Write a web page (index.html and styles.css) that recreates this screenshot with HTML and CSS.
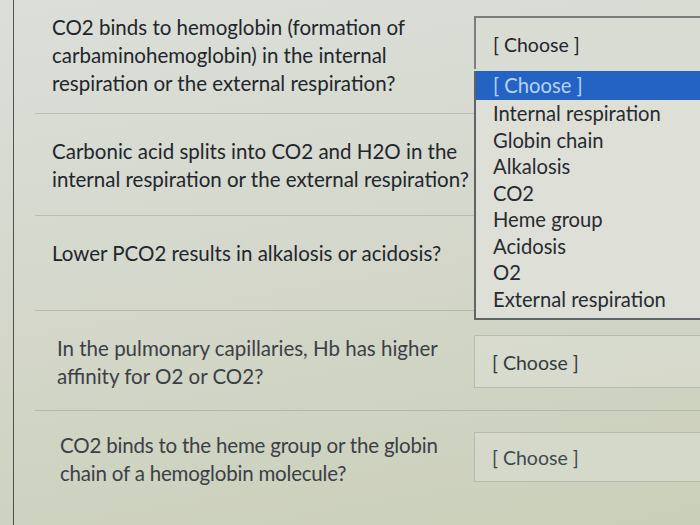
FILE: index.html
```html
<!DOCTYPE html>
<html lang="en">
<head>
<meta charset="utf-8">
<title>Matching quiz</title>
<link rel="stylesheet" href="styles.css">
</head>
<body>
<div class="quiz">
  <div class="row row-1">
    <div class="question">CO2 binds to hemoglobin (formation of carbaminohemoglobin) in the internal respiration or the external respiration?</div>
    <div class="answer">
      <div class="select open">[ Choose ]</div>
      <ul class="options">
        <li class="selected">[ Choose ]</li>
        <li>Internal respiration</li>
        <li>Globin chain</li>
        <li>Alkalosis</li>
        <li>CO2</li>
        <li>Heme group</li>
        <li>Acidosis</li>
        <li>O2</li>
        <li>External respiration</li>
      </ul>
    </div>
  </div>
  <div class="row row-2">
    <div class="question">Carbonic acid splits into CO2 and H2O in the internal respiration or the external respiration?</div>
    <div class="answer"></div>
  </div>
  <div class="row row-3">
    <div class="question">Lower PCO2 results in alkalosis or acidosis?</div>
    <div class="answer"></div>
  </div>
  <div class="row row-4">
    <div class="question faded">In the pulmonary capillaries, Hb has higher affinity for O2 or CO2?</div>
    <div class="answer"><div class="select">[ Choose ]</div></div>
  </div>
  <div class="row row-5">
    <div class="question faded">CO2 binds to the heme group or the globin chain of a hemoglobin molecule?</div>
    <div class="answer"><div class="select">[ Choose ]</div></div>
  </div>
</div>
</body>
</html>
```

FILE: styles.css
```css
html, body {
  margin: 0;
  padding: 0;
  height: 525px;
  overflow: hidden;
}
body {
  background: linear-gradient(170deg, #dcdfd9 0%, #d5d8cc 45%, #cacfb9 100%);
  font-family: Lato, "Open Sans", sans-serif;
  color: #22262c;
}
.quiz {
  margin-left: 13px;
  border-left: 1px solid #4f5350;
  height: 525px;
  padding-left: 21px;
}
.row {
  display: grid;
  grid-template-columns: 439px 1fr;
  border-top: 1px solid rgba(80, 85, 80, 0.22);
  box-sizing: border-box;
}
.row-1 { border-top: none; height: 113px; }
.row-2 { height: 102px; }
.row-3 { height: 95px; }
.row-4 { height: 100px; }
.row-5 { height: 115px; }
.question {
  font-size: 20.5px;
  line-height: 28px;
  padding-left: 17px;
  padding-right: 0;
}
.row-1 .question { padding-top: 13px; padding-right: 30px; }
.row-2 .question { padding-top: 23px; }
.row-3 .question { padding-top: 23px; }
.row-4 .question { padding-top: 23px; padding-left: 22px; padding-right: 30px; }
.row-5 .question { padding-top: 20px; padding-left: 25px; padding-right: 20px; letter-spacing: -0.2px; }
.faded { color: #3c4045; }
.answer {
  position: relative;
}
.select {
  box-sizing: border-box;
  height: 53px;
  padding-left: 17px;
  font-size: 19.5px;
  line-height: 53px;
  border: 1px solid rgba(90, 95, 90, 0.25);
  border-right: none;
  background: rgba(230, 232, 224, 0.35);
}
.select.open {
  margin-top: 16px;
  border: 2px solid #7a7e7c;
  border-right: none;
  border-bottom: none;
  background: #d9dcd3;
}
.row-4 .select { margin-top: 24px; color: #353a40; }
.row-5 .select { margin-top: 21px; height: 50px; line-height: 50px; color: #3d4a52; }
.options {
  position: absolute;
  left: 0;
  top: 71px;
  right: 0;
  margin: 0;
  padding: 0 0 6px 0;
  list-style: none;
  background: #dee0d8;
  border: 2px solid #5f6466;
  border-right: none;
  border-top: none;
  z-index: 2;
}
.options li {
  height: 26.5px;
  line-height: 26.5px;
  padding-left: 17px;
  font-size: 20.2px;
  color: #272b30;
}
.options li.selected {
  height: 29px;
  line-height: 29px;
  background: #2463c4;
  color: #b7d3f2;
}
```
